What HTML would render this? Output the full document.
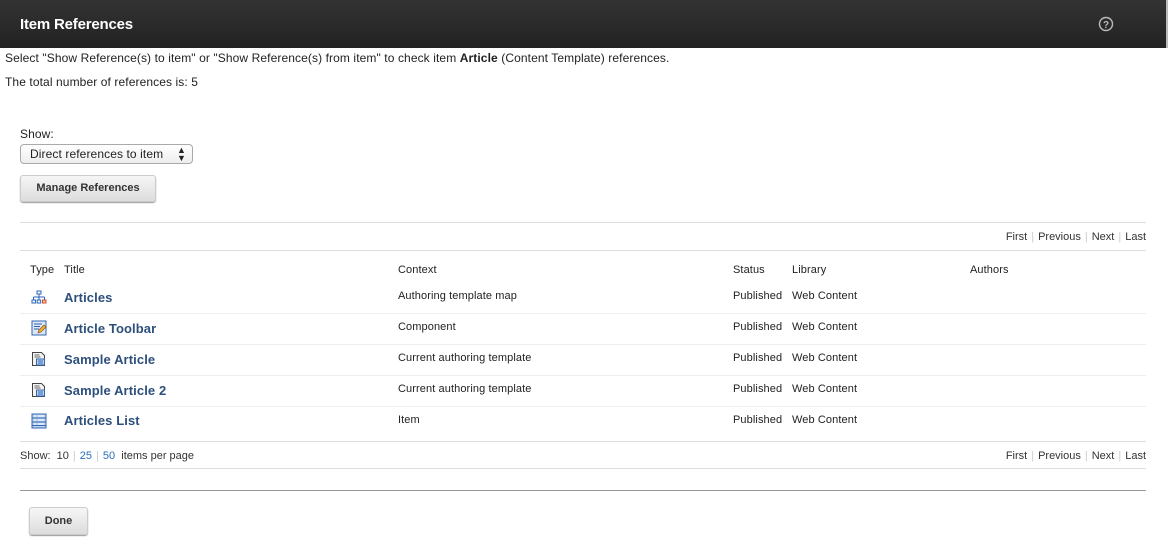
<!DOCTYPE html>
<html><head><style>
body{margin:0;width:1168px;height:548px;background:#fff;font-family:"Liberation Sans",Arial,sans-serif;position:relative;overflow:hidden;color:#222}
.a{position:absolute;white-space:nowrap}
.hdr{position:absolute;left:0;top:0;width:1166px;height:48px;background:linear-gradient(#333,#222);border-right:2px solid #bbb}
.s12{font-size:12px;letter-spacing:0.1px}
.s11{font-size:11px;letter-spacing:0.1px}
.hl{position:absolute;left:20px;width:1126px;height:1px;background:#ddd}
.t{font-size:13px;font-weight:bold;color:#2d4f7c;letter-spacing:0.1px}
.btn{position:absolute;border:1px solid #ccc;border-radius:3px;background:linear-gradient(#f6f6f6,#ddd);box-shadow:0 1px 1px #999;font-size:11px;font-weight:bold;color:#333;text-align:center}
.pg{font-size:11px;color:#333}
.pg span{color:#ccc;margin:0 4px}
.ic{position:absolute;left:31px;width:16px;height:16px}
</style></head><body>
<div class="hdr"></div>
<div class="a" style="left:20px;top:16px;color:#fff;font-size:15px;font-weight:bold;letter-spacing:-0.2px">Item References</div>
<svg class="a" style="left:1098px;top:16px" width="16" height="16"><circle cx="8" cy="8" r="6.5" fill="none" stroke="#bbb" stroke-width="1.4"/><text x="8" y="12" font-size="10" font-weight="bold" fill="#bbb" text-anchor="middle" font-family="Liberation Sans">?</text></svg>
<div class="a s12" style="left:5px;top:51px">Select "Show Reference(s) to item" or "Show Reference(s) from item" to check item <b>Article</b> (Content Template) references.</div>
<div class="a s12" style="left:5px;top:75px">The total number of references is: 5</div>
<div class="a s12" style="left:20px;top:127px">Show:</div>
<div class="a s12" style="left:20px;top:144px;width:171px;height:18px;border:1px solid #aaa;border-radius:4px;background:linear-gradient(#fff,#eee)"><span style="position:absolute;left:9px;top:2px">Direct references to item</span><span style="position:absolute;right:6px;top:1px;font-size:9px;line-height:8px">▲<br>▼</span></div>
<div class="btn" style="left:20px;top:175px;width:134px;height:25px;line-height:25px">Manage References</div>
<div class="hl" style="top:222px"></div>
<div class="a pg" style="right:22px;top:231px">First<span>|</span>Previous<span>|</span>Next<span>|</span>Last</div>
<div class="hl" style="top:250px"></div>
<div class="a s11" style="left:30px;top:264px">Type</div>
<div class="a s11" style="left:64px;top:264px">Title</div>
<div class="a s11" style="left:398px;top:264px">Context</div>
<div class="a s11" style="left:733px;top:264px">Status</div>
<div class="a s11" style="left:792px;top:264px">Library</div>
<div class="a s11" style="left:970px;top:264px">Authors</div>

<svg class="ic" style="top:290px" viewBox="0 0 16 16"><rect x="6" y="1" width="4" height="3" fill="#fff" stroke="#2b66b8"/><path d="M8 4v3M2.5 7h11M2.5 7v3M8 7v3M13.5 7v3" stroke="#2b66b8" fill="none"/><rect x="1" y="10" width="3.5" height="3" fill="#fff" stroke="#2b66b8"/><rect x="6.2" y="10" width="3.5" height="3" fill="#fff" stroke="#2b66b8"/><rect x="11.5" y="10" width="3.5" height="3" fill="#f5c0b0" stroke="#d0502a"/></svg>
<div class="a t" style="left:64px;top:290px">Articles</div>
<div class="a s11" style="left:398px;top:290px">Authoring template map</div>
<div class="a s11" style="left:733px;top:290px">Published</div>
<div class="a s11" style="left:792px;top:290px">Web Content</div>
<div class="hl" style="top:313px;background:#eee"></div>

<svg class="ic" style="top:320px" viewBox="0 0 16 16"><rect x="1" y="1" width="14" height="14" fill="#dbe7f7" stroke="#3466b0"/><path d="M3 4h8M3 6.5h6M3 9h5" stroke="#3466b0"/><path d="M7 13l1-3 5-5 2 2-5 5z" fill="#f0b030" stroke="#8a5a10" stroke-width=".7"/></svg>
<div class="a t" style="left:64px;top:321px">Article Toolbar</div>
<div class="a s11" style="left:398px;top:321px">Component</div>
<div class="a s11" style="left:733px;top:321px">Published</div>
<div class="a s11" style="left:792px;top:321px">Web Content</div>
<div class="hl" style="top:344px;background:#eee"></div>

<svg class="ic" style="top:351px" viewBox="0 0 16 16"><path d="M1.5 1.5h9l3 3v10h-12z" fill="#f4f4f4" stroke="#444"/><path d="M3.5 4h5M3.5 6h6" stroke="#666"/><rect x="5.5" y="8" width="8" height="6" fill="#bcd4f0" stroke="#3466b0"/><path d="M7 10h5M7 12h5" stroke="#3466b0"/></svg>
<div class="a t" style="left:64px;top:352px">Sample Article</div>
<div class="a s11" style="left:398px;top:352px">Current authoring template</div>
<div class="a s11" style="left:733px;top:352px">Published</div>
<div class="a s11" style="left:792px;top:352px">Web Content</div>
<div class="hl" style="top:375px;background:#eee"></div>

<svg class="ic" style="top:382px" viewBox="0 0 16 16"><path d="M1.5 1.5h9l3 3v10h-12z" fill="#f4f4f4" stroke="#444"/><path d="M3.5 4h5M3.5 6h6" stroke="#666"/><rect x="5.5" y="8" width="8" height="6" fill="#bcd4f0" stroke="#3466b0"/><path d="M7 10h5M7 12h5" stroke="#3466b0"/></svg>
<div class="a t" style="left:64px;top:383px">Sample Article 2</div>
<div class="a s11" style="left:398px;top:383px">Current authoring template</div>
<div class="a s11" style="left:733px;top:383px">Published</div>
<div class="a s11" style="left:792px;top:383px">Web Content</div>
<div class="hl" style="top:406px;background:#eee"></div>

<svg class="ic" style="top:413px" viewBox="0 0 16 16"><rect x="1" y="1" width="14" height="14" fill="#bcd4f0" stroke="#3466b0"/><path d="M1 5h14M1 9h14M1 12.5h14" stroke="#3466b0"/><path d="M3 3h2M7 3h6M3 7h2M7 7h6M3 11h2M7 11h6" stroke="#fff"/></svg>
<div class="a t" style="left:64px;top:413px">Articles List</div>
<div class="a s11" style="left:398px;top:414px">Item</div>
<div class="a s11" style="left:733px;top:414px">Published</div>
<div class="a s11" style="left:792px;top:414px">Web Content</div>

<div class="hl" style="top:441px"></div>
<div class="a pg" style="left:20px;top:450px">Show:&nbsp; 10<span>|</span><b style="font-weight:normal;color:#2a6ebb">25</b><span>|</span><b style="font-weight:normal;color:#2a6ebb">50</b>&nbsp; items per page</div>
<div class="a pg" style="right:22px;top:450px">First<span>|</span>Previous<span>|</span>Next<span>|</span>Last</div>
<div class="hl" style="top:468px"></div>
<div class="hl" style="top:490px;background:#999"></div>
<div class="btn" style="left:29px;top:507px;width:57px;height:26px;line-height:26px">Done</div>
</body></html>
